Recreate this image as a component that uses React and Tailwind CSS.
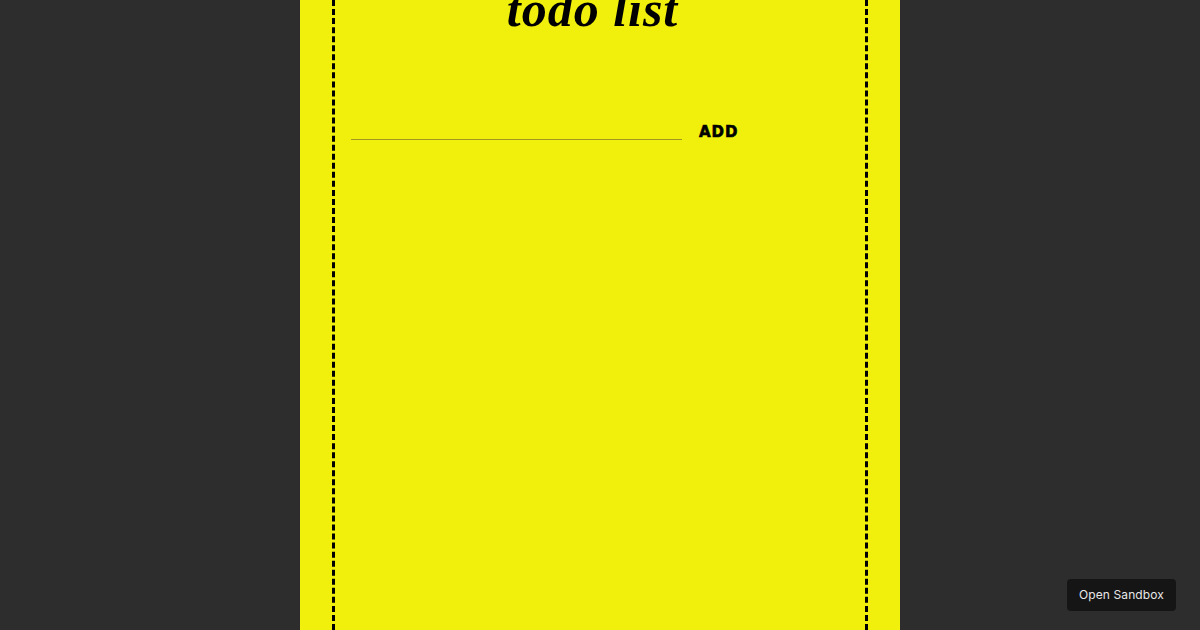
export default function App() {
  return (
    <div className="relative h-[630px] overflow-hidden bg-[#2d2d2d]">
      <div className="mx-auto h-full w-[600px] bg-[#f0f00c] px-8">
        <div className="flow-root h-full border-x-[3px] border-dashed border-black pl-4">
          <h1 className="mt-[-21px] h-[99px] pr-[31px] text-center font-['Liberation_Serif',serif] text-[50px] leading-[60px] font-bold tracking-[1px] text-black italic">
            todo list
          </h1>
          {/* Add form */}
          <form className="mt-[45px] flex items-start">
            <input type="text" className="h-[17px] w-[331px] border-b border-[#a09820] bg-transparent outline-none" />
            <button type="button" className="ml-[17px] font-['DejaVu_Sans',sans-serif] text-[15px] leading-[18px] font-bold tracking-[1px] text-black [-webkit-text-stroke:0.6px_black]">
              ADD
            </button>
          </form>
        </div>
      </div>

      <button className="absolute right-6 bottom-[19px] h-8 w-[109px] rounded bg-[#151515] font-['Inter',sans-serif] text-xs tracking-[0.1px] text-[#e8e8e8]">
        Open Sandbox
      </button>
    </div>
  )
}
